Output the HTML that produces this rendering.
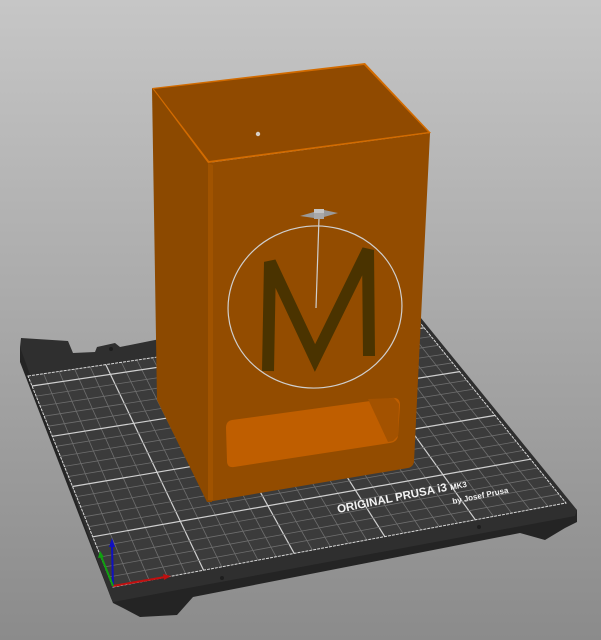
<!DOCTYPE html>
<html><head><meta charset="utf-8"><style>
html,body{margin:0;padding:0;width:601px;height:640px;overflow:hidden}
body{background:linear-gradient(#c6c6c6,#8b8b8b)}
svg{display:block}
</style></head><body>
<svg id="s" width="601" height="640" viewBox="0 0 601 640" xmlns="http://www.w3.org/2000/svg">
<polygon points="20,347 20,362 111,598 113,603 123,608 140,617 177,615 193,597 520,533 545,540 565,528 577,522 577,510" fill="#242424"/>
<polygon points="20,347 21,338 68,341 73,353 95,352 97,347 115,343 120,347 399,291 577,510 575,516 113,602 111,598" fill="#2f2f2f"/>
<circle cx="111" cy="349" r="2" fill="#1e1e1e"/>
<circle cx="222" cy="578" r="2" fill="#1e1e1e"/>
<circle cx="479" cy="527" r="2" fill="#1e1e1e"/>
<polygon id="ga" points="28,376 417,319 566,503 113,587" fill="#3b3b3b"/>
<g id="grid"></g>
<polygon points="28,376 417,319 566,503 113,587" fill="none" stroke="#d8d8d8" stroke-width="1" stroke-dasharray="3,1"/>
<g fill="#f2f2f2" font-family="Liberation Sans, sans-serif" font-weight="bold">
<text x="338" y="513" font-size="11.5" transform="rotate(-11.5 338 513)">ORIGINAL PRUSA i3 <tspan font-size="8">MK3</tspan></text>
<text x="453" y="504" font-size="8" transform="rotate(-11.5 453 504)">by Josef Prusa</text>
</g>
<line x1="113" y1="586" x2="112" y2="545" stroke="#1010c0" stroke-width="2"/>
<polygon points="109,547 112,538 115,547" fill="#1010c0"/>
<line x1="113" y1="586" x2="165" y2="577" stroke="#c01010" stroke-width="2"/>
<polygon points="163,574 171,576 164,580" fill="#c01010"/>
<line x1="113" y1="586" x2="101" y2="556" stroke="#10a010" stroke-width="2"/>
<polygon points="98,558 100,551 104,557" fill="#10a010"/>
<!-- box left face -->
<polygon points="152,88 157,400 207,502 212,502 212,163" fill="#8c4900"/>
<!-- front face -->
<path d="M208,163 L430,133 L414,462 Q413,467 408,468 L213,501 Q208,502 208,497 Z" fill="#934c00"/>
<path d="M208,163 L213,165 L213,500 L208,500 Z" fill="#a05300"/>
<!-- top -->
<polygon points="152,88 365,63 431,133 208,163" fill="#d26b00"/>
<polygon points="154,89 364,65 428,132 209,161" fill="#904a00"/>
<circle cx="258" cy="134" r="2.2" fill="#d8d0c8"/>
<!-- window -->
<path d="M232,420 L392,398 Q400,397 400,405 L398,436 Q397,442 390,443 L234,467 Q227,468 227,461 L226,428 Q226,421 232,420 Z" fill="#bf5e00"/>
<polygon points="368,399 394,398 399,404 398,436 393,441 388,442" fill="#a35200"/>
<path d="M268,371 L270,262 L315,358 L368,250 L369,356" fill="none" stroke="#4a3300" stroke-width="12" stroke-linejoin="miter"/>
<ellipse cx="315" cy="307" rx="87" ry="81" transform="rotate(-6 315 307)" fill="none" stroke="#cfcfcf" stroke-width="1.2"/>
<line x1="319" y1="218" x2="316" y2="308" stroke="#cfcfcf" stroke-width="1.2"/>
<polygon points="300,216 314,212 314,218" fill="#9a9a9a"/>
<polygon points="338,213 324,210 324,217" fill="#9a9a9a"/>
<rect x="314" y="209" width="10" height="10" fill="#a8a8a8"/>
<rect x="314" y="209" width="10" height="4" fill="#c4c4c4"/>
</svg>
<script>
(function(){
var TL=[28,376],TR=[417,319],BR=[566,503],BL=[113,587];
function P(u,v){var a=[TL[0]+(TR[0]-TL[0])*u,TL[1]+(TR[1]-TL[1])*u];var b=[BL[0]+(BR[0]-BL[0])*u,BL[1]+(BR[1]-BL[1])*u];return [a[0]+(b[0]-a[0])*v,a[1]+(b[1]-a[1])*v];}
var g=document.getElementById('grid'),h='';
function L(p,q,c,w){h+='<line x1="'+p[0].toFixed(1)+'" y1="'+p[1].toFixed(1)+'" x2="'+q[0].toFixed(1)+'" y2="'+q[1].toFixed(1)+'" stroke="'+c+'" stroke-width="'+w+'"/>';}
for(var i=1;i<25;i++){var u=i/25;var maj=(i%5==0);L(P(u,0),P(u,1),maj?'#d0d0d0':'#6e6e6e',maj?1.2:0.8);}
for(var j=1;j<21;j++){var v=j/21;var maj=((21-j)%5==0);L(P(0,v),P(1,v),maj?'#d0d0d0':'#6e6e6e',maj?1.2:0.8);}
g.innerHTML=h;
})();
</script>
</body></html>
